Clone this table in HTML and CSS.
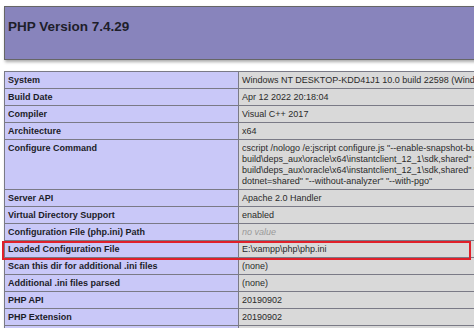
FILE: index.html
```html
<!DOCTYPE html>
<html>
<head>
<meta charset="utf-8">
<link rel="stylesheet" href="styles.css">
</head>
<body>
<div class="page">
  <table class="head">
    <tr><td><div class="title"><h1>PHP Version 7.4.29</h1></div></td></tr>
  </table>
  <table class="info">
    <colgroup><col class="c1"><col class="c2"></colgroup>
    <tr><td class="e">System</td><td class="v">Windows NT DESKTOP-KDD41J1 10.0 build 22598 (Windows 10) AMD64</td></tr>
    <tr><td class="e">Build Date</td><td class="v">Apr 12 2022 20:18:04</td></tr>
    <tr><td class="e">Compiler</td><td class="v">Visual C++ 2017</td></tr>
    <tr><td class="e">Architecture</td><td class="v">x64</td></tr>
    <tr><td class="e">Configure Command</td><td class="v">cscript /nologo /e:jscript configure.js "--enable-snapshot-build" "--enable-debug-pack" "--with-pdo-oci=c:\php-snap-<br>build\deps_aux\oracle\x64\instantclient_12_1\sdk,shared" "--with-oci8-12c=c:\php-snap-<br>build\deps_aux\oracle\x64\instantclient_12_1\sdk,shared" "--enable-object-out-dir=../obj/" "--enable-com-<br>dotnet=shared" "--without-analyzer" "--with-pgo"</td></tr>
    <tr><td class="e">Server API</td><td class="v">Apache 2.0 Handler</td></tr>
    <tr><td class="e">Virtual Directory Support</td><td class="v">enabled</td></tr>
    <tr><td class="e">Configuration File (php.ini) Path</td><td class="v"><i>no value</i></td></tr>
    <tr><td class="e">Loaded Configuration File</td><td class="v">E:\xampp\php\php.ini</td></tr>
    <tr><td class="e">Scan this dir for additional .ini files</td><td class="v">(none)</td></tr>
    <tr><td class="e">Additional .ini files parsed</td><td class="v">(none)</td></tr>
    <tr><td class="e">PHP API</td><td class="v">20190902</td></tr>
    <tr><td class="e">PHP Extension</td><td class="v">20190902</td></tr>
    <tr><td class="e">Zend Extension</td><td class="v">320190902</td></tr>
  </table>
  <div class="mark"></div>
</div>
</body>
</html>
```
FILE: styles.css
```css
html, body {
  margin: 0;
  padding: 0;
  background: #fff;
  overflow: hidden;
  width: 474px;
  height: 328px;
}
.page {
  position: relative;
  padding: 6px 0 0 4px;
  font-family: "Liberation Sans", Arial, sans-serif;
  color: #222;
}
.head {
  width: 700px;
  border-collapse: collapse;
  box-shadow: 1px 2px 3px #aaa;
  margin-bottom: 11px;
}
.head td {
  padding: 0;
  background: #8884bc;
  border: 1px solid #666;
}
.title {
  height: 52px;
  box-sizing: border-box;
  padding: 12px 0 0 3px;
}
.title h1 {
  margin: 0;
  font-size: 13.5px;
  line-height: 16px;
  font-weight: bold;
  color: #1e1e2a;
}
.info {
  width: 700px;
  table-layout: fixed;
  border-collapse: collapse;
  box-shadow: 1px 2px 3px #ccc;
}
.c1 { width: 234px; }
.info td {
  border: 1px solid #7a7a86;
  padding: 2.5px 3px;
  font-size: 9px;
  line-height: 11px;
  white-space: nowrap;
  overflow: hidden;
  vertical-align: baseline;
}
.e {
  background: #c9c8f8;
  font-weight: bold;
  color: #1c1c28;
}
.v {
  background: #d9d9d9;
  color: #2a2a2a;
}
.v i {
  color: #9a9a9a;
}
.mark {
  position: absolute;
  left: 2px;
  top: 241px;
  width: 469px;
  height: 19px;
  box-sizing: border-box;
  border: 2px solid #e0202a;
}
```
